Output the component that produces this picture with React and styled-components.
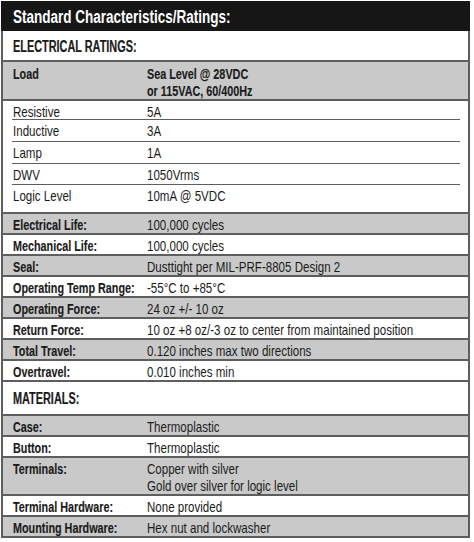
import React from "react";
import styled, { createGlobalStyle } from "styled-components";

const GlobalStyle = createGlobalStyle`
  html, body {
    margin: 0;
    padding: 0;
    background: #ffffff;
  }
  body {
    font-family: "Liberation Sans", Arial, sans-serif;
    color: #1b1b1b;
  }
`;

const LINE = "#5e5e5e";
const SHADE = "#c9c9c9";

// the sheet uses a condensed face; squeeze Arial-metric text to match
const squeeze = (scale) => `
  transform: scaleX(${scale});
  transform-origin: 0 50%;
  white-space: nowrap;
`;

const Sheet = styled.div`
  width: 469px;
  margin: 1px 0 0 1px;
`;

const Title = styled.div`
  height: 30px;
  background: #161616;
  color: #ffffff;
  padding: 2px 0 0 12px;
  box-sizing: border-box;
  font-weight: 700;
  font-size: 18px;
  line-height: 28px;
  span {
    display: inline-block;
    ${squeeze(0.75)}
  }
`;

const Frame = styled.div`
  overflow: hidden;
  border-left: 2px solid ${LINE};
  border-right: 2px solid ${LINE};
  border-bottom: 2px solid ${LINE};
`;

const Section = styled.div`
  height: ${({ $h }) => $h}px;
  box-sizing: border-box;
  display: flex;
  align-items: flex-end;
  padding: 0 0 ${({ $pb }) => $pb}px 10px;
  font-weight: 700;
  font-size: 16px;
  line-height: 18px;
  border-top: ${({ $line }) => ($line ? `2px solid ${LINE}` : "none")};
  span {
    ${squeeze(0.68)}
    -webkit-text-stroke: 0.2px #1b1b1b;
  }
`;

const Row = styled.div`
  display: grid;
  grid-template-columns: 134px 1fr;
  box-sizing: border-box;
  min-height: ${({ $h }) => $h || 21}px;
  padding: ${({ $pt }) => ($pt === undefined ? 2 : $pt)}px 0 0 10px;
  background: ${({ $shade }) => ($shade ? SHADE : "#ffffff")};
  border-top: 2px solid ${LINE};
  font-size: 15px;
  line-height: 17px;
`;

const SubList = styled.div`
  border-top: 2px solid ${LINE};
`;

const SubRow = styled.div`
  display: grid;
  grid-template-columns: 134px 1fr;
  box-sizing: border-box;
  height: ${({ $h }) => $h}px;
  margin: 0 ${({ $last }) => ($last ? 0 : 8)}px 0 ${({ $last }) => ($last ? 0 : 9)}px;
  padding: 2px 0 0 ${({ $last }) => ($last ? 10 : 1)}px;
  border-bottom: ${({ $last }) => ($last ? "none" : `1px solid ${LINE}`)};
  font-size: 15px;
  line-height: 17px;
`;

const Label = styled.div`
  font-weight: ${({ $bold }) => ($bold ? 700 : 400)};
  ${({ $bold }) => squeeze($bold ? 0.72 : 0.77)}
  ${({ $bold }) => ($bold ? "-webkit-text-stroke: 0.15px #1b1b1b;" : "")}
`;

const Value = styled.div`
  font-weight: ${({ $bold }) => ($bold ? 700 : 400)};
  ${({ $bold }) => squeeze($bold ? 0.72 : 0.77)}
  ${({ $bold }) => ($bold ? "-webkit-text-stroke: 0.15px #1b1b1b;" : "")}
`;

const electrical = [
  ["Resistive", "5A", 19],
  ["Inductive", "3A", 22],
  ["Lamp", "1A", 22],
  ["DWV", "1050Vrms", 21],
];

const general = [
  ["Electrical Life:", "100,000 cycles", true, 19],
  ["Mechanical Life:", "100,000 cycles", false, 21],
  ["Seal:", "Dusttight per MIL-PRF-8805 Design 2", true, 19],
  ["Operating Temp Range:", "-55°C to +85°C", false, 21],
  ["Operating Force:", "24 oz +/- 10 oz", true, 18],
  ["Return Force:", "10 oz +8 oz/-3 oz to center from maintained position", false, 21],
  ["Total Travel:", "0.120 inches max two directions", true, 19],
  ["Overtravel:", "0.010 inches min", false, 19],
];

const materials = [
  ["Case:", ["Thermoplastic"], true, 17],
  ["Button:", ["Thermoplastic"], false, 20],
  ["Terminals:", ["Copper with silver", "Gold over silver for logic level"], true, 37],
  ["Terminal Hardware:", ["None provided"], false, 19],
  ["Mounting Hardware:", ["Hex nut and lockwasher"], true, 18],
];

export default function App() {
  return (
    <>
      <GlobalStyle />
      <Sheet>
        <Title>
          <span>Standard Characteristics/Ratings:</span>
        </Title>
        <Frame>
          <Section $h={29} $pb={4}>
            <span>ELECTRICAL RATINGS:</span>
          </Section>
          <Row $shade $h={37} $pt={3}>
            <Label $bold>Load</Label>
            <Value $bold>
              Sea Level @ 28VDC
              <br />
              or 115VAC, 60/400Hz
            </Value>
          </Row>
          <SubList>
            {electrical.map(([k, v, h]) => (
              <SubRow key={k} $h={h}>
                <Label>{k}</Label>
                <Value>{v}</Value>
              </SubRow>
            ))}
            <SubRow $h={27} $last>
              <Label>Logic Level</Label>
              <Value>10mA @ 5VDC</Value>
            </SubRow>
          </SubList>
          {general.map(([k, v, shade, h]) => (
            <Row key={k} $shade={shade} $h={h}>
              <Label $bold>{k}</Label>
              <Value>{v}</Value>
            </Row>
          ))}
          <Section $h={34} $pb={6} $line>
            <span>MATERIALS:</span>
          </Section>
          {materials.map(([k, lines, shade, h]) => (
            <Row key={k} $shade={shade} $h={h}>
              <Label $bold>{k}</Label>
              <Value>
                {lines.map((l, i) => (
                  <div key={i}>{l}</div>
                ))}
              </Value>
            </Row>
          ))}
        </Frame>
      </Sheet>
    </>
  );
}
